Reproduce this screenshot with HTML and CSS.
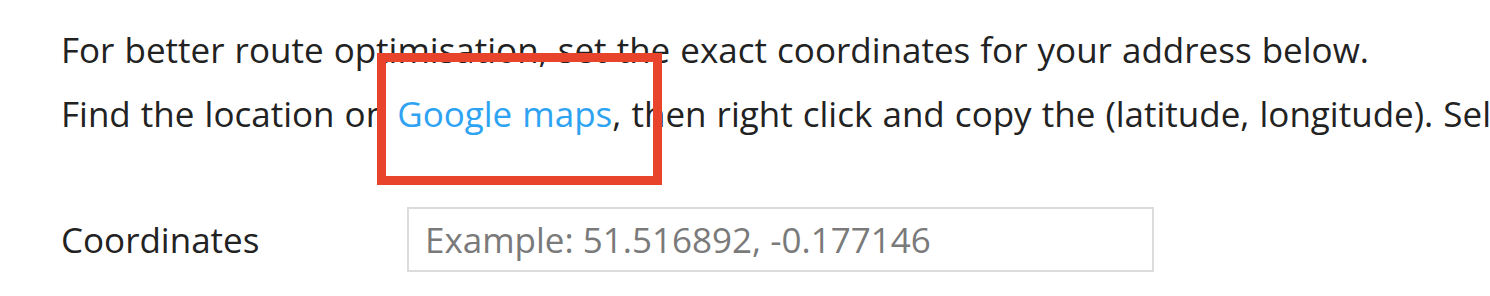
FILE: index.html
```html
<!DOCTYPE html>
<html lang="en">
<head>
    <meta charset="UTF-8">
    <title>Coordinates</title>
    <link rel="stylesheet" href="styles.css">
</head>
<body>
    <div class="geo-box">
        <div class="geo-box__intro">
            <p class="geo-box__line">For better route optimisation, set the exact coordinates for your address below.</p>
            <p class="geo-box__line">Find the location on <a href="javascript:" class="geo-link">Google maps</a>, then right click and copy the (latitude, longitude). Select the coordinates and paste them in the field below.</p>
            <i class="mark-box"></i>
        </div>
        <div class="form-row">
            <label class="form-label" for="coords">Coordinates</label>
            <input class="form-input" id="coords" type="text" placeholder="Example: 51.516892, -0.177146">
        </div>
    </div>
</body>
</html>
```

FILE: styles.css
```css
body {
    margin: 0;
    background-color: white;
    color: #222;
    font-family: "Open Sans", sans-serif;
    font-size: 35px;
    word-spacing: 1px;
    overflow: hidden;
}
.geo-box {
    padding: 18px 0 0 61px;
    white-space: nowrap;
}
.geo-box__intro {
    position: relative;
}
.geo-box__line {
    margin: 0;
    line-height: 64px;
}
.geo-link {
    color: #2ea3f2;
    text-decoration: none;
}

/* annotation drawn over the text */
.mark-box {
    position: absolute;
    left: 316px; top: 35px;
    width: 267px; height: 114px;
    border: 9px solid #e8442b;
}
.form-row {
    display: flex;
    align-items: center;
    margin-top: 61px;
}
.form-label {
    width: 346px;
}
.form-input {
    box-sizing: border-box;
    width: 747px;
    height: 65px;
    margin: 0;
    border: 2px solid #dcdcdc;
    padding: 0 16px;
    font: inherit;
    color: #222;
    outline: none;
}
.form-input::placeholder {
    color: #7a7a7a;
    opacity: 1;
}
```
